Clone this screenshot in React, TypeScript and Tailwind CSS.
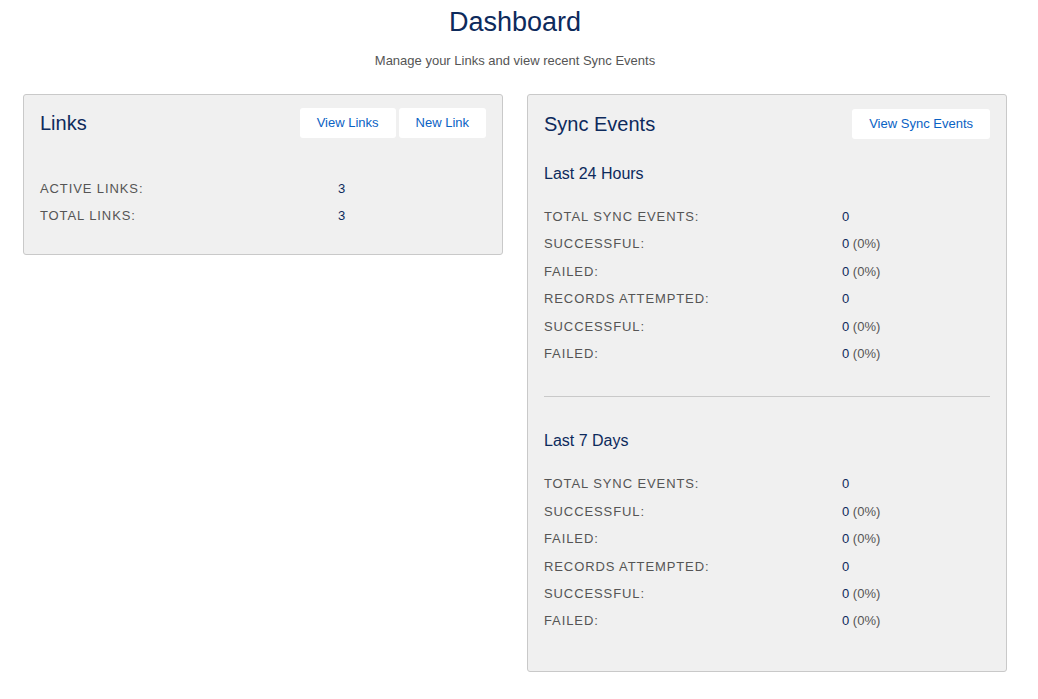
import React from "react";

const font = { fontFamily: '"Liberation Sans", Arial, sans-serif' };

function Row({ label, value, pct }: { label: string; value: string; pct?: string }) {
  return (
    <div className="flex leading-[27.4px] text-[13px]">
      <div className="w-[298px] uppercase tracking-[0.9px] text-[#555555]">{label}</div>
      <div>
        <span className="text-[#0d2a5c]">{value}</span>
        {pct && <span className="text-[#555555]"> {pct}</span>}
      </div>
    </div>
  );
}

function Btn({ children }: { children: React.ReactNode }) {
  return (
    <button className="h-[30px] px-[17px] bg-white rounded-[3px] text-[13px] text-[#0a62c4]">{children}</button>
  );
}

function SyncRows() {
  return (
    <div className="flex flex-col">
      <Row label="Total Sync Events:" value="0" />
      <Row label="Successful:" value="0" pct="(0%)" />
      <Row label="Failed:" value="0" pct="(0%)" />
      <Row label="Records Attempted:" value="0" />
      <Row label="Successful:" value="0" pct="(0%)" />
      <Row label="Failed:" value="0" pct="(0%)" />
    </div>
  );
}

export default function App() {
  return (
    <div style={font} className="w-[1030px] px-[23px] bg-white min-h-[699px]">
      <div className="text-center">
        <h1 className="pt-[5px] text-[27px] leading-[34px] text-[#0d2a5c]">Dashboard</h1>
        <p className="mt-[13px] text-[13px] leading-[18px] text-[#555555]">Manage your Links and view recent Sync Events</p>
      </div>
      <div className="mt-[24px] grid grid-cols-2 gap-6 items-start">
        <div className="border border-[#c9c9c9] rounded-[3px] bg-[#f0f0f0] px-4 pt-[13px] pb-[24px]">
          <div className="flex items-center justify-between h-[30px]">
            <h2 className="text-[20px] text-[#0d2a5c]">Links</h2>
            <div className="flex gap-[3px]">
              <Btn>View Links</Btn>
              <Btn>New Link</Btn>
            </div>
          </div>
          <div className="mt-[37px]">
            <Row label="Active Links:" value="3" />
            <Row label="Total Links:" value="3" />
          </div>
        </div>
        <div className="border border-[#c9c9c9] rounded-[3px] bg-[#f0f0f0] px-4 pt-[14px] pb-[36px]">
          <div className="flex items-center justify-between h-[30px]">
            <h2 className="text-[20px] text-[#0d2a5c]">Sync Events</h2>
            <Btn>View Sync Events</Btn>
          </div>
          <h3 className="mt-[23px] text-[16px] leading-[24px] text-[#0d2a5c]">Last 24 Hours</h3>
          <div className="mt-[17px]">
            <SyncRows />
          </div>
          <div className="mt-[29px] border-t border-[#c9c9c9]" />
          <h3 className="mt-[32px] text-[16px] leading-[24px] text-[#0d2a5c]">Last 7 Days</h3>
          <div className="mt-[17px]">
            <SyncRows />
          </div>
        </div>
      </div>
    </div>
  );
}
